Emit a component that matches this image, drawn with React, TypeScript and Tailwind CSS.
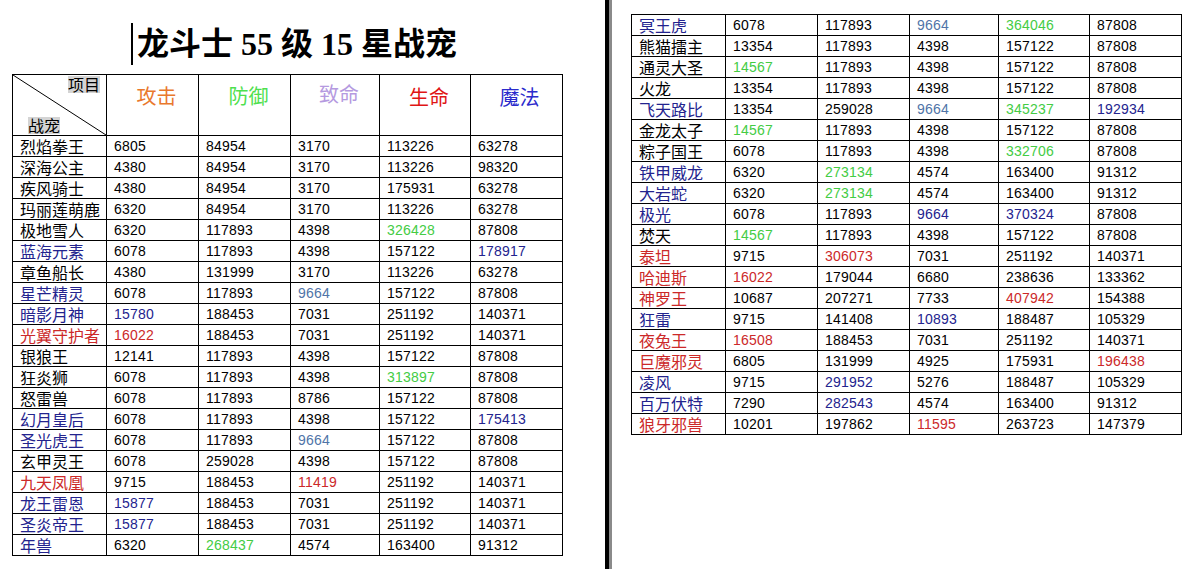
import React from "react";

// 颜色代码: n 深蓝, s 灰蓝, r 红, g 绿
const colorClass: Record<string, string> = {
  k: "text-black",
  n: "text-[#23238e]",
  s: "text-[#4f74a8]",
  r: "text-[#cc2929]",
  g: "text-[#44cc44]",
};

const colWidths = ["w-[94px]", "w-[92px]", "w-[92px]", "w-[89px]", "w-[91px]", "w-[92px]"];

const leftRows = [
  "烈焰拳王 6805 84954 3170 113226 63278",
  "深海公主 4380 84954 3170 113226 98320",
  "疾风骑士 4380 84954 3170 175931 63278",
  "玛丽莲萌鹿 6320 84954 3170 113226 63278",
  "极地雪人 6320 117893 4398 326428|g 87808",
  "蓝海元素|n 6078 117893 4398 157122 178917|n",
  "章鱼船长 4380 131999 3170 113226 63278",
  "星芒精灵|n 6078 117893 9664|s 157122 87808",
  "暗影月神|n 15780|n 188453 7031 251192 140371",
  "光翼守护者|r 16022|r 188453 7031 251192 140371",
  "银狼王 12141 117893 4398 157122 87808",
  "狂炎狮 6078 117893 4398 313897|g 87808",
  "怒雷兽 6078 117893 8786 157122 87808",
  "幻月皇后|n 6078 117893 4398 157122 175413|n",
  "圣光虎王|n 6078 117893 9664|s 157122 87808",
  "玄甲灵王 6078 259028 4398 157122 87808",
  "九天凤凰|r 9715 188453 11419|r 251192 140371",
  "龙王雷恩|n 15877|n 188453 7031 251192 140371",
  "圣炎帝王|n 15877|n 188453 7031 251192 140371",
  "年兽|n 6320 268437|g 4574 163400 91312",
];

const rightRows = [
  "冥王虎|n 6078 117893 9664|s 364046|g 87808",
  "熊猫擂主 13354 117893 4398 157122 87808",
  "通灵大圣 14567|g 117893 4398 157122 87808",
  "火龙 13354 117893 4398 157122 87808",
  "飞天路比|n 13354 259028 9664|s 345237|g 192934|n",
  "金龙太子 14567|g 117893 4398 157122 87808",
  "粽子国王 6078 117893 4398 332706|g 87808",
  "铁甲威龙|n 6320 273134|g 4574 163400 91312",
  "大岩蛇|n 6320 273134|g 4574 163400 91312",
  "极光|n 6078 117893 9664|n 370324|n 87808",
  "焚天 14567|g 117893 4398 157122 87808",
  "泰坦|r 9715 306073|r 7031 251192 140371",
  "哈迪斯|r 16022|r 179044 6680 238636 133362",
  "神罗王|r 10687 207271 7733 407942|r 154388",
  "狂雷|n 9715 141408 10893|n 188487 105329",
  "夜兔王|r 16508|r 188453 7031 251192 140371",
  "巨魔邪灵|r 6805 131999 4925 175931 196438|r",
  "凌风|n 9715 291952|n 5276 188487 105329",
  "百万伏特|n 7290 282543|n 4574 163400 91312",
  "狼牙邪兽|r 10201 197862 11595|r 263723 147379",
];

function DataRow({ line }: { line: string }) {
  const cells = line.split(" ").map((c) => {
    const [text, color] = c.split("|");
    return { text, color: color || "k" };
  });
  return (
    <div className="flex h-[21px] border-b border-black">
      {cells.map((c, i) => (
        <div
          key={i}
          className={`${colWidths[i]} ${colorClass[c.color]} shrink-0 h-full border-r border-black flex items-center pl-[7px] whitespace-nowrap ${
            i === 0
              ? "text-[16px] leading-[20px] font-['Noto_Sans_CJK_SC',sans-serif]"
              : "text-[14px] leading-[20px] tracking-[0.2px] font-['Liberation_Sans',Arial,sans-serif]"
          }`}
        >
          {c.text}
        </div>
      ))}
    </div>
  );
}

function HeaderRow() {
  return (
    <div className="flex h-[61px] border-b border-black font-['Noto_Sans_CJK_SC',sans-serif]">
      <div className="w-[94px] shrink-0 h-full border-r border-black relative flex flex-col justify-between">
        <svg className="absolute inset-0" width="93" height="60" viewBox="0 0 93 60">
          <line x1="0" y1="0" x2="93" y2="60" stroke="black" strokeWidth="1" />
        </svg>
        <div className="relative flex justify-end pr-[6px] pt-[1px]">
          <span className="bg-[#d4d4d4] text-[16px] leading-[17px]">项目</span>
        </div>
        <div className="relative flex pl-[15px] pb-[1px]">
          <span className="bg-[#d4d4d4] text-[16px] leading-[17px]">战宠</span>
        </div>
      </div>
      <div className="w-[92px] shrink-0 h-full border-r border-black pt-[10px] pl-[8px] text-center text-[20px] leading-[22px] text-[#e9782d]">
        攻击
      </div>
      <div className="w-[92px] shrink-0 h-full border-r border-black pt-[10px] pl-[8px] text-center text-[20px] leading-[22px] text-[#4ee04e]">
        防御
      </div>
      <div className="w-[89px] shrink-0 h-full border-r border-black pt-[8px] pl-[8px] text-center text-[20px] leading-[22px] text-[#b59ae0]">
        致命
      </div>
      <div className="w-[91px] shrink-0 h-full border-r border-black pt-[11px] pl-[8px] text-center text-[20px] leading-[22px] text-[#e01515]">
        生命
      </div>
      <div className="w-[92px] shrink-0 h-full border-r border-black pt-[11px] pl-[6px] text-center text-[20px] leading-[22px] text-[#2b2bcc]">
        魔法
      </div>
    </div>
  );
}

export default function App() {
  return (
    <div className="flex h-screen w-full bg-white overflow-hidden">
      <div className="w-[605px] shrink-0 pt-[23px] pl-[12px]">
        <div className="ml-[119px] h-[42px] flex items-center border-l-2 border-black pl-[4px]">
          <h1 className="text-[32px] leading-[42px] font-bold text-black whitespace-nowrap font-['Liberation_Serif','Noto_Sans_CJK_SC',serif]">
            龙斗士 55 级 15 星战宠
          </h1>
        </div>
        <div className="mt-[9px] w-[551px] border-t border-l border-black">
          <HeaderRow />
          {leftRows.map((r) => (
            <DataRow key={r} line={r} />
          ))}
        </div>
      </div>
      <div className="w-[4px] shrink-0 h-full bg-black" />
      <div className="w-[3px] shrink-0 h-full bg-[#8a8a8a]" />
      <div className="flex-1 pt-[14px] pl-[19px]">
        <div className="w-[551px] border-t border-l border-black">
          {rightRows.map((r) => (
            <DataRow key={r} line={r} />
          ))}
        </div>
      </div>
    </div>
  );
}
